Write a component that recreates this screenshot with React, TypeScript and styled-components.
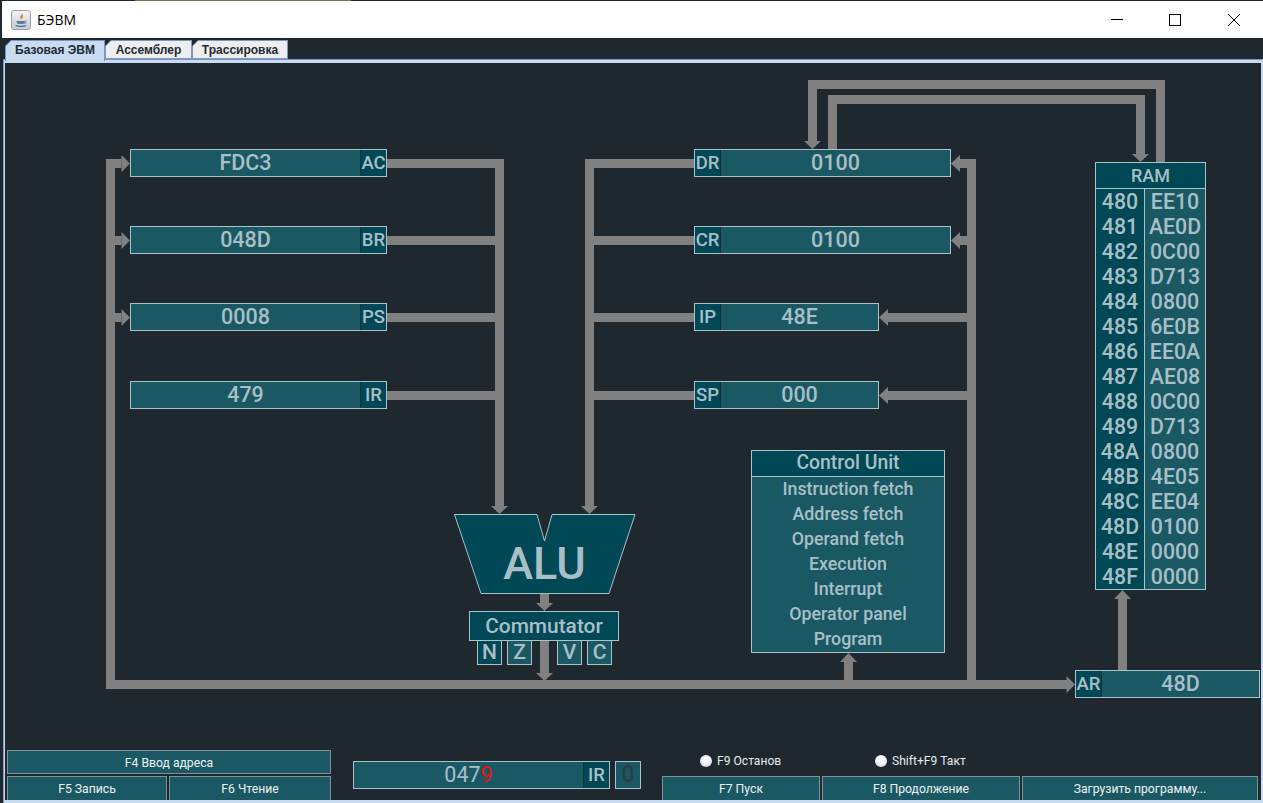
import React from "react";
import styled, { createGlobalStyle } from "styled-components";

const DARK = "#1f272f";
const FILL = "#1a5964";
const HEAD = "#004855";
const LINE = "#a9c3ca";
const INK = "#a9bfc7";
const BUS = "#808080";
const ORIGIN_X = 5;
const ORIGIN_Y = 63;

const Global = createGlobalStyle`
  html, body { margin: 0; padding: 0; background: ${DARK}; }
  * { box-sizing: border-box; }
`;

const Page = styled.div`
  width: 1263px;
  height: 803px;
  overflow: hidden;
  display: flex;
  flex-direction: column;
  background: ${DARK};
  font-family: Roboto, "Liberation Sans", sans-serif;
`;

const TopEdge = styled.div`
  height: 1px;
  flex: none;
  padding-left: 135px;
  &::before {
    content: "";
    display: block;
    width: 216px;
    height: 1px;
    background: #77744a;
  }
`;

const TitleBar = styled.div`
  height: 37px;
  flex: none;
  margin-left: 2px;
  background: #fff;
  display: flex;
  align-items: center;
  padding-left: 9px;
`;

const AppIcon = styled.svg`
  width: 20px;
  height: 20px;
  flex: none;
`;

const TitleText = styled.div`
  margin-left: 6px;
  font: 14px "Open Sans", "Liberation Sans", sans-serif;
  color: #000;
`;

const WindowButtons = styled.div`
  margin-left: auto;
  display: flex;
`;

const WindowButton = styled.div<{ $nudge?: boolean }>`
  width: 58px;
  height: 37px;
  display: flex;
  align-items: center;
  justify-content: center;
  padding-right: ${(p) => (p.$nudge ? 2 : 0)}px;
  svg { width: 12px; height: 12px; display: block; }
`;

const TabStrip = styled.div`
  height: 21px;
  flex: none;
  display: flex;
  padding: 2px 0 0 5px;
  position: relative;
  z-index: 1;
`;

const Tab = styled.div<{ $active?: boolean; $w: number }>`
  width: ${(p) => p.$w}px;
  height: ${(p) => (p.$active ? 21 : 19)}px;
  padding: 1px 1px ${(p) => (p.$active ? 0 : 1)}px 1px;
  background: #7b96bf;
  clip-path: polygon(6px 0, 100% 0, 100% 100%, 0 100%, 0 6px);
`;

const TabFace = styled.div<{ $active?: boolean }>`
  height: 100%;
  background: ${(p) => (p.$active ? "#c8dbf1" : "#eeeeee")};
  clip-path: polygon(5px 0, 100% 0, 100% 100%, 0 100%, 0 5px);
  display: flex;
  justify-content: center;
  padding-top: 2px;
  font: bold 12px "Liberation Sans", Arial, sans-serif;
  line-height: 14px;
  color: #222a33;
`;

const Pane = styled.div`
  flex: 1;
  min-height: 0;
  margin-left: 3px;
  border-top: 1px solid #7b96bf;
  border-left: 1px solid #7b96bf;
  padding: 3px 2px 3px 1px;
  background: #c8dbf1;
  display: flex;
`;

const Canvas = styled.div`
  flex: 1;
  min-width: 0;
  background: ${DARK};
  display: flex;
  flex-direction: column;
`;

const Diagram = styled.div`
  position: relative;
  flex: 1;
`;

const BusLayer = styled.svg`
  position: absolute;
  left: 0;
  top: 0;
  width: 1256px;
  height: 687px;
`;

const Node = styled.div<{ $x: number; $y: number }>`
  position: absolute;
  left: ${(p) => p.$x - ORIGIN_X}px;
  top: ${(p) => p.$y - ORIGIN_Y}px;
`;

const RegisterBox = styled.div<{ $w: number }>`
  width: ${(p) => p.$w}px;
  height: 28px;
  display: flex;
  border: 1px solid ${LINE};
  background: ${FILL};
  color: ${INK};
  font-size: 21.5px;
  font-weight: 500;
  line-height: 26px;
`;

const RegValue = styled.div<{ $thin?: boolean }>`
  flex: 1;
  text-align: center;
  font-weight: ${(p) => (p.$thin ? 400 : 500)};
  white-space: nowrap;
`;

const RegLabel = styled.div<{ $left?: boolean }>`
  flex: none;
  width: 26px;
  background: ${HEAD};
  text-align: center;
  font-size: 18.5px;
  ${(p) =>
    p.$left ? "border-right: 1px solid #10323d;" : "border-left: 1px solid #10323d;"}
`;

const RedDigit = styled.span`
  color: #f01010;
`;

const RamBox = styled.div`
  width: 111px;
  height: 428px;
  border: 1px solid ${LINE};
  background: ${FILL};
  color: ${INK};
  font-weight: 500;
  font-size: 21.3px;
  display: flex;
  flex-direction: column;
`;

const PanelHead = styled.div<{ $size: number; $h: number; $lift: number }>`
  height: ${(p) => p.$h}px;
  line-height: ${(p) => p.$h - 1 - p.$lift}px;
  flex: none;
  text-align: center;
  background: ${HEAD};
  border-bottom: 1px solid ${LINE};
  font-size: ${(p) => p.$size}px;
`;

const RamBody = styled.div`
  display: grid;
  grid-template-columns: 49px 1fr;
  grid-auto-rows: 25px;
  line-height: 25px;
  text-align: center;
  flex: 1;
`;

const RamAddr = styled.div`
  background: ${HEAD};
  border-right: 1px solid ${LINE};
`;

const RamWord = styled.div``;

const ControlBox = styled.div`
  width: 194px;
  height: 203px;
  border: 1px solid ${LINE};
  background: ${FILL};
  color: ${INK};
  font-weight: 500;
  display: flex;
  flex-direction: column;
`;

const ControlItem = styled.div`
  height: 25px;
  line-height: 23px;
  text-align: center;
  font-size: 17.8px;
`;

const AluShape = styled.svg`
  display: block;
  width: 183px;
  height: 81px;
`;

const AluText = styled.div`
  position: absolute;
  left: 0;
  width: 181px;
  top: 24px;
  text-align: center;
  font-size: 45px;
  line-height: 52px;
  font-weight: 500;
  color: ${INK};
`;

const CommBox = styled.div`
  width: 150px;
  height: 30px;
  border: 1px solid ${LINE};
  background: ${HEAD};
  color: ${INK};
  font-size: 20.9px;
  font-weight: 500;
  line-height: 28px;
  text-align: center;
`;

const Flag = styled.div<{ $on?: boolean }>`
  width: 25px;
  height: 24px;
  border: 1px solid ${LINE};
  border-top: none;
  background: ${(p) => (p.$on ? HEAD : FILL)};
  color: ${INK};
  font-size: 21px;
  font-weight: 500;
  line-height: 22px;
  text-align: center;
`;

const ControlRow = styled.div`
  flex: none;
  height: 50px;
  display: flex;
  padding-left: 2px;
`;

const KeyGrid = styled.div`
  flex: none;
  width: 324px;
  display: grid;
  grid-template-columns: 160px 162px;
  grid-template-rows: 24px 24px;
  gap: 2px;
`;

const KeyButton = styled.div<{ $wide?: boolean; $open?: boolean; $w?: number }>`
  ${(p) => (p.$wide ? "grid-column: 1 / span 2; padding-top: 1px;" : "")}
  ${(p) => (p.$w ? `width: ${p.$w}px; flex: none;` : "")}
  border: 1px solid #7f9299;
  ${(p) => (p.$open ? "border-bottom: none;" : "")}
  background: ${FILL};
  color: #eef2f3;
  font-size: 12.2px;
  display: flex;
  align-items: center;
  justify-content: center;
`;

const IrGroup = styled.div`
  flex: none;
  margin: 11px 0 0 22px;
  display: flex;
  gap: 5px;
  align-self: flex-start;
`;

const ZeroBox = styled.div`
  width: 26px;
  height: 28px;
  border: 1px solid ${LINE};
  background: ${FILL};
  color: #2c3d45;
  font-size: 23px;
  font-weight: 500;
  line-height: 25px;
  text-align: center;
`;

const RightGroup = styled.div`
  flex: none;
  margin-left: 21px;
  width: 596px;
  display: flex;
  flex-direction: column;
`;

const RadioRow = styled.div`
  height: 26px;
  padding: 5px 0 0 38px;
  display: flex;
`;

const RadioItem = styled.div`
  width: 175px;
  height: 12px;
  display: flex;
  align-items: center;
  gap: 5px;
  color: #e6ebed;
  font-size: 12.1px;
  white-space: nowrap;
`;

const RadioDot = styled.div`
  width: 12px;
  height: 12px;
  border-radius: 50%;
  flex: none;
  background: radial-gradient(circle at 50% 40%, #ffffff 30%, #dfe7f3 62%, #aebdd4 100%);
`;

const ButtonRow = styled.div`
  height: 24px;
  display: flex;
  gap: 2px;
`;

type RegProps = { label: string; value: React.ReactNode; w: number; left?: boolean; thin?: boolean };

const Register = ({ label, value, w, left, thin }: RegProps) => (
  <RegisterBox $w={w}>
    {left && <RegLabel $left>{label}</RegLabel>}
    <RegValue $thin={thin}>{value}</RegValue>
    {!left && <RegLabel>{label}</RegLabel>}
  </RegisterBox>
);

const headRight = (tip: number, y: number) => `${tip - 8.5},${y - 8.5} ${tip},${y} ${tip - 8.5},${y + 8.5}`;
const headLeft = (tip: number, y: number) => `${tip + 9},${y - 8.5} ${tip},${y} ${tip + 9},${y + 8.5}`;
const headDown = (x: number, tip: number) => `${x - 8.5},${tip - 8} ${x},${tip} ${x + 8.5},${tip - 8}`;
const headUp = (x: number, tip: number) => `${x - 8.5},${tip + 9} ${x},${tip} ${x + 8.5},${tip + 9}`;

const busPaths = [
  "M121.5 163.5H110.5V684.5H1067.5",
  "M121.5 240.5H110.5",
  "M121.5 317.5H110.5",
  "M387 163.5H499.5V507",
  "M387 240.5H499.5",
  "M387 317.5H499.5",
  "M387 395.5H499.5",
  "M694 163.5H589.5V507",
  "M694 240.5H589.5",
  "M694 317.5H589.5",
  "M694 395.5H589.5",
  "M960 163.5H971.5V684.5",
  "M960 240.5H971.5",
  "M888 317.5H971.5",
  "M888 395.5H971.5",
  "M848.5 661V684",
  "M544.5 593V604",
  "M544.5 641V674",
  "M1122.5 670V598",
  "M812.5 142V84.5H1160.5V163",
  "M832.5 149V99.5H1140.5V155",
];

const busHeads = [
  headRight(130, 163.5),
  headRight(130, 240.5),
  headRight(130, 317.5),
  headRight(1075, 684.5),
  headDown(499.5, 514),
  headDown(589.5, 514),
  headDown(544.5, 611),
  headDown(544.5, 681),
  headDown(812.5, 149),
  headDown(1140.5, 162),
  headLeft(951, 163.5),
  headLeft(951, 240.5),
  headLeft(879, 317.5),
  headLeft(879, 395.5),
  headUp(848.5, 653),
  headUp(1122.5, 590),
];

const ramRows = [
  ["480", "EE10"], ["481", "AE0D"], ["482", "0C00"], ["483", "D713"],
  ["484", "0800"], ["485", "6E0B"], ["486", "EE0A"], ["487", "AE08"],
  ["488", "0C00"], ["489", "D713"], ["48A", "0800"], ["48B", "4E05"],
  ["48C", "EE04"], ["48D", "0100"], ["48E", "0000"], ["48F", "0000"],
];

const controlItems = [
  "Instruction fetch", "Address fetch", "Operand fetch", "Execution",
  "Interrupt", "Operator panel", "Program",
];

const registers: (RegProps & { x: number; y: number })[] = [
  { label: "AC", value: "FDC3", w: 257, x: 130, y: 149 },
  { label: "BR", value: "048D", w: 257, x: 130, y: 226 },
  { label: "PS", value: "0008", w: 257, x: 130, y: 303 },
  { label: "IR", value: "479", w: 257, x: 130, y: 381 },
  { label: "DR", value: "0100", w: 257, x: 694, y: 149, left: true },
  { label: "CR", value: "0100", w: 257, x: 694, y: 226, left: true },
  { label: "IP", value: "48E", w: 185, x: 694, y: 303, left: true },
  { label: "SP", value: "000", w: 185, x: 694, y: 381, left: true },
  { label: "AR", value: "48D", w: 185, x: 1075, y: 670, left: true },
];

const flags = [
  { name: "N", x: 477, on: true },
  { name: "Z", x: 507 },
  { name: "V", x: 557 },
  { name: "C", x: 587 },
];

export default function App() {
  return (
    <Page>
      <Global />
      <TopEdge />
      <TitleBar>
        <AppIcon viewBox="0 0 20 20">
          <defs>
            <linearGradient id="tile" x1="0" y1="0" x2="0" y2="1">
              <stop offset="0" stopColor="#f4f5f7" />
              <stop offset="1" stopColor="#c3c9d1" />
            </linearGradient>
          </defs>
          <rect x="0.5" y="0.5" width="19" height="19" rx="2.5" fill="url(#tile)" stroke="#9aa0a8" />
          <path d="M10.5 3c1 1.6-1.8 2.6-1.2 4.6.3 1 1 1.5 1.3 2-.1-1.2 2.2-2.2 1.1-3.9.8-.7-.3-1.5-1.2-2.7z" fill="#e8822a" />
          <path d="M5.5 11h8.5c0 1.8-1 3-2.2 3H7.7c-1.2 0-2.2-1.2-2.2-3z" fill="#5d7f9f" />
          <path d="M14 11.2c1.8-.4 2 1.8-.6 2.2" fill="none" stroke="#5d7f9f" />
          <path d="M4.5 15.5c2.5 1.1 8 1.1 10.5 0" fill="none" stroke="#4c6f92" strokeWidth="1.2" />
        </AppIcon>
        <TitleText>БЭВМ</TitleText>
        <WindowButtons>
          <WindowButton $nudge>
            <svg viewBox="0 0 12 12"><path d="M0 5.5H12" stroke="#000" fill="none" /></svg>
          </WindowButton>
          <WindowButton $nudge>
            <svg viewBox="0 0 12 12"><rect x="0.5" y="0.5" width="11" height="11" stroke="#000" fill="none" /></svg>
          </WindowButton>
          <WindowButton>
            <svg viewBox="0 0 12 12"><path d="M0 0L12 12M12 0L0 12" stroke="#000" fill="none" /></svg>
          </WindowButton>
        </WindowButtons>
      </TitleBar>
      <TabStrip>
        <Tab $active $w={100}><TabFace $active>Базовая ЭВМ</TabFace></Tab>
        <Tab $w={87}><TabFace>Ассемблер</TabFace></Tab>
        <Tab $w={96}><TabFace>Трассировка</TabFace></Tab>
      </TabStrip>
      <Pane>
        <Canvas>
          <Diagram>
            <BusLayer viewBox={`${ORIGIN_X} ${ORIGIN_Y} 1256 687`}>
              {busPaths.map((d) => (
                <path key={d} d={d} fill="none" stroke={BUS} strokeWidth="9" />
              ))}
              {busHeads.map((points) => (
                <polygon key={points} points={points} fill={BUS} />
              ))}
            </BusLayer>
            {registers.map((r) => (
              <Node key={r.label + r.x} $x={r.x} $y={r.y}>
                <Register {...r} />
              </Node>
            ))}
            <Node $x={1095} $y={162}>
              <RamBox>
                <PanelHead $size={18} $h={26} $lift={0}>RAM</PanelHead>
                <RamBody>
                  {ramRows.map(([addr, word]) => (
                    <React.Fragment key={addr}>
                      <RamAddr>{addr}</RamAddr>
                      <RamWord>{word}</RamWord>
                    </React.Fragment>
                  ))}
                </RamBody>
              </RamBox>
            </Node>
            <Node $x={751} $y={450}>
              <ControlBox>
                <PanelHead $size={19.4} $h={26} $lift={2}>Control Unit</PanelHead>
                {controlItems.map((item) => (
                  <ControlItem key={item}>{item}</ControlItem>
                ))}
              </ControlBox>
            </Node>
            <Node $x={454} $y={514}>
              <AluShape viewBox="0 0 183 81">
                <polygon
                  points="0.5,0.5 83,0.5 90.5,27 98,0.5 181,0.5 155,79.5 27,79.5"
                  fill={HEAD}
                  stroke={LINE}
                />
              </AluShape>
              <AluText>ALU</AluText>
            </Node>
            <Node $x={469} $y={611}>
              <CommBox>Commutator</CommBox>
            </Node>
            {flags.map((f) => (
              <Node key={f.name} $x={f.x} $y={641}>
                <Flag $on={f.on}>{f.name}</Flag>
              </Node>
            ))}
          </Diagram>
          <ControlRow>
            <KeyGrid>
              <KeyButton $wide>F4 Ввод адреса</KeyButton>
              <KeyButton $open>F5 Запись</KeyButton>
              <KeyButton $open>F6 Чтение</KeyButton>
            </KeyGrid>
            <IrGroup>
              <Register
                label="IR"
                w={257}
                thin
                value={<>047<RedDigit>9</RedDigit></>}
              />
              <ZeroBox>0</ZeroBox>
            </IrGroup>
            <RightGroup>
              <RadioRow>
                <RadioItem><RadioDot />F9 Останов</RadioItem>
                <RadioItem><RadioDot />Shift+F9 Такт</RadioItem>
              </RadioRow>
              <ButtonRow>
                <KeyButton $open $w={158}>F7 Пуск</KeyButton>
                <KeyButton $open $w={198}>F8 Продолжение</KeyButton>
                <KeyButton $open $w={236}>Загрузить программу...</KeyButton>
              </ButtonRow>
            </RightGroup>
          </ControlRow>
        </Canvas>
      </Pane>
    </Page>
  );
}
